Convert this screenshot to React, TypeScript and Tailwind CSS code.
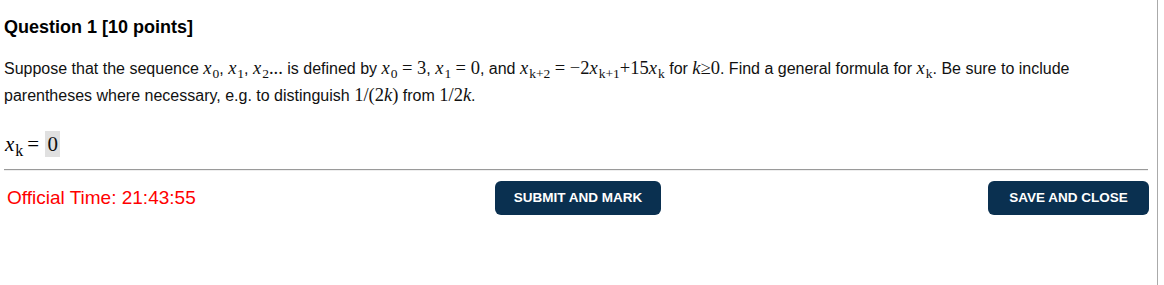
import React from 'react';

const serif = 'font-["Liberation_Serif","Times_New_Roman",serif]';

// inline math: italic variable with an upright subscript
const V = ({ v, sub }: { v: string; sub?: string }) => (
  <span className={`${serif} text-[18.5px]`}>
    <span className="italic">{v}</span>
    {sub && <span className="relative top-[4px] ml-px text-[13.5px] not-italic leading-none">{sub}</span>}
  </span>
);

const M = ({ children }: { children: React.ReactNode }) => (
  <span className={`${serif} text-[18.5px]`}>{children}</span>
);

export default function App() {
  return (
    <div className="w-[1158px] min-h-[285px] border-r border-[#aaaaaa] bg-white font-['Liberation_Sans',Arial,sans-serif] text-black">
      <div className="pl-1 pr-2">
        <h2 className="pt-[17px] text-[18px] font-bold leading-5">Question 1 [10 points]</h2>

        <p className="mt-[18px] text-[16px] leading-[27px] text-[#111]">
          Suppose that the sequence <V v="x" sub="0" />, <V v="x" sub="1" />, <V v="x" sub="2" />
          <M>...</M> is defined by <V v="x" sub="0" /> <M>= 3</M>, <V v="x" sub="1" /> <M>= 0</M>, and{' '}
          <V v="x" sub="k+2" /> <M>= −2</M>
          <V v="x" sub="k+1" />
          <M>+15</M>
          <V v="x" sub="k" /> for{' '}
          <M>
            <span className="italic">k</span>≥0
          </M>
          . Find a general formula for <V v="x" sub="k" />. Be sure to include parentheses where necessary, e.g. to
          distinguish{' '}
          <M>
            1/(2<span className="italic">k</span>)
          </M>{' '}
          from{' '}
          <M>
            1/2<span className="italic">k</span>
          </M>
          .
        </p>

        <div className={`mt-[22px] flex items-center ${serif} text-[21px] leading-none`}>
          <span className="pl-px">
            <span className="italic">x</span>
            <span className="relative top-[5px] ml-px text-[16px] leading-none">k</span>
          </span>
          <span className="ml-[4px]">=</span>
          <span className="ml-[6px] flex h-[26px] w-[15px] items-center justify-center bg-[#e0e0e0] text-[#111]">0</span>
        </div>

        <hr className="mt-[12px] mr-[1px] border-t border-b border-t-[#9a9a9a] border-b-[#eeeeee]" />

        <div className="mt-[10px] grid grid-cols-3 items-center pl-[3px]">
          <div className="text-[19px] text-[#ff0000]">Official Time: 21:43:55</div>
          <div className="flex justify-center">
            <button className="h-[34px] w-[166px] rounded-[6px] bg-[#0a3050] text-[13.5px] font-bold text-white">
              SUBMIT AND MARK
            </button>
          </div>
          <div className="flex justify-end">
            <button className="h-[34px] w-[161px] rounded-[6px] bg-[#0a3050] text-[13.5px] font-bold text-white">
              SAVE AND CLOSE
            </button>
          </div>
        </div>
      </div>
    </div>
  );
}
